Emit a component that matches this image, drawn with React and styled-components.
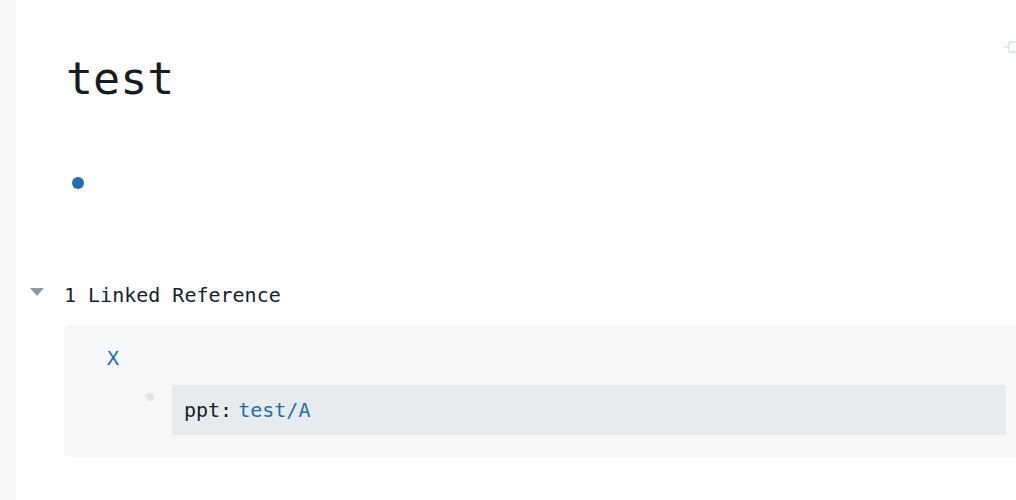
import React from 'react';
import styled, { createGlobalStyle } from 'styled-components';

const GlobalStyle = createGlobalStyle`
  html, body {
    margin: 0;
    padding: 0;
    background: #ffffff;
    overflow: hidden;
  }
  body {
    font-family: "DejaVu Sans Mono", "Liberation Mono", monospace;
    color: #1b2329;
  }
`;

const Page = styled.div`
  display: flex;
  width: 1016px;
  height: 500px;
  position: relative;
  overflow: hidden;
`;

const Sidebar = styled.div`
  width: 16px;
  flex-shrink: 0;
  background: #f6f7f9;
`;

const Main = styled.div`
  flex: 1;
  display: flex;
  flex-direction: column;
  padding-top: 47px;
`;

const Title = styled.h1`
  margin: 0 0 0 50px;
  font-size: 45px;
  font-weight: 400;
  line-height: 64px;
  color: #161c21;
`;

const BulletRow = styled.div`
  display: flex;
  align-items: center;
  height: 30px;
  margin: 57px 0 0 56px;
`;

const Bullet = styled.span`
  display: block;
  width: ${p => p.size}px;
  height: ${p => p.size}px;
  border-radius: 50%;
  background: ${p => p.color};
  flex-shrink: 0;
`;

const RefsHeader = styled.div`
  display: flex;
  align-items: center;
  margin: 82px 0 0 14px;
  height: 30px;
  font-size: 20px;
  color: #15222b;
`;

const Caret = styled.span`
  width: 0;
  height: 0;
  border-left: 7px solid transparent;
  border-right: 7px solid transparent;
  border-top: 8px solid #8d9ba4;
  margin-right: 20px;
  margin-top: -6px;
`;

const Card = styled.div`
  margin: 15px 0 0 48px;
  background: #f6f7f9;
  border-radius: 6px 0 0 6px;
  padding: 20px 10px 22px 43px;
  display: flex;
  flex-direction: column;
`;

const PageLink = styled.div`
  color: #1f6fae;
  font-size: 20px;
  line-height: 26px;
`;

const BlockRow = styled.div`
  display: flex;
  align-items: flex-start;
  margin-top: 14px;
`;

const DotWrap = styled.div`
  width: 26px;
  margin-left: 39px;
  padding-top: 8px;
  flex-shrink: 0;
`;

const Block = styled.div`
  flex: 1;
  background: #e7ebee;
  height: 50px;
  display: flex;
  align-items: center;
  padding-left: 12px;
  font-size: 20px;
`;

const PropKey = styled.span`
  color: #15242b;
  margin-right: 6px;
`;

const PropVal = styled.span`
  color: #1f6fae;
`;

const CornerIcon = styled.svg`
  position: absolute;
  top: 40px;
  right: 0;
`;

export default function App() {
  return (
    <>
      <GlobalStyle />
      <Page>
        <Sidebar />
        <Main>
          <Title>test</Title>
          <BulletRow>
            <Bullet size={12} color="#1f70ae" />
          </BulletRow>
          <RefsHeader>
            <Caret />
            <span>1 Linked Reference</span>
          </RefsHeader>
          <Card>
            <PageLink>X</PageLink>
            <BlockRow>
              <DotWrap>
                <Bullet size={8} color="#e3e5e8" />
              </DotWrap>
              <Block>
                <PropKey>ppt:</PropKey>
                <PropVal>test/A</PropVal>
              </Block>
            </BlockRow>
          </Card>
        </Main>
        <CornerIcon width="12" height="14" viewBox="0 0 12 14">
          <path d="M0 7 H4" stroke="#d3e3f0" strokeWidth="1.5" fill="none" />
          <rect x="4.5" y="2" width="12" height="10" rx="2" stroke="#d3e3f0" strokeWidth="1.5" fill="none" />
        </CornerIcon>
      </Page>
    </>
  );
}
